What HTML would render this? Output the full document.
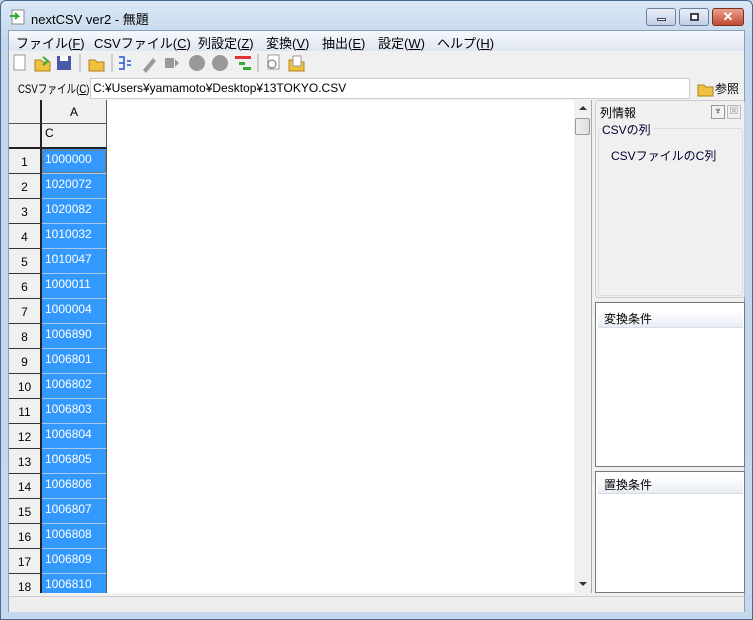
<!DOCTYPE html><html><head><meta charset="utf-8"><style>
*{margin:0;padding:0;box-sizing:border-box}
body{width:753px;height:620px;overflow:hidden;background:#c5d8ee;font-family:"Liberation Sans","Noto Sans CJK JP",sans-serif;font-size:12px;color:#000;position:relative}
.a{position:absolute}
.frame{left:0;top:0;width:753px;height:620px;border:1px solid #4a6a8c;border-radius:6px 6px 0 0;background:linear-gradient(#dbe8f6,#c3d7ec 40px,#c5d8ee)}
.client{left:8px;top:30px;width:737px;height:582px;background:#f0f0f0;border:1px solid #8aa0b8}
.menu{left:0;top:0;width:735px;height:20px;background:linear-gradient(#f6f8fc,#dfe6f2)}
.menu span{position:absolute;top:2px;font-size:13px}
.cell{position:absolute;border-right:1px solid #555;border-bottom:1px solid #555;text-align:center}
.rh{left:0;width:33px;height:25px;background:#f0f0f0;font-size:12px;line-height:26px;border-right:2px solid #222;border-bottom:1px solid #333}
.dc{left:33px;width:65px;height:25px;background:#3399ff;color:#fff;border-bottom:1px solid #a8c8ec;text-align:left;padding-left:3px;line-height:20px}
.btn{position:absolute;top:8px;height:18px;border:1px solid #6a7f9a;border-radius:3px;background:linear-gradient(#e8eef7,#c2d0e3)}
.pt{position:absolute;left:2px;width:145px;height:17px;background:linear-gradient(#fff,#e8ecf4);border-bottom:1px solid #d8dde8;padding-left:6px;font-size:12px;line-height:16px}
</style></head><body>
<div class="a frame"></div>
<svg class="a" style="left:9px;top:8px" width="18" height="18"><rect x="3" y="2" width="12" height="14" fill="#fff" stroke="#888"/><path d="M1 8h8l-3-3M9 8l-3 3" stroke="#3a3" stroke-width="2" fill="none"/></svg>
<div class="a" style="left:31px;top:9px;font-size:13px">nextCSV ver2 - 無題</div>
<div class="btn" style="left:646px;width:30px"><div class="a" style="left:10px;top:9px;width:9px;height:3px;background:#fff;border:1px solid #445"></div></div>
<div class="btn" style="left:679px;width:30px"><div class="a" style="left:10px;top:4px;width:9px;height:8px;border:2px solid #445;background:#fff"></div></div>
<div class="btn" style="left:712px;width:32px;background:linear-gradient(#e9a08e,#c24a33);border-color:#7a3020;color:#fff;font-weight:bold;text-align:center;line-height:16px;font-size:13px">✕</div>
<div class="a client">
 <div class="a menu">
  <span style="left:7px">ファイル(<u>F</u>)</span><span style="left:85px">CSVファイル(<u>C</u>)</span><span style="left:189px">列設定(<u>Z</u>)</span><span style="left:257px">変換(<u>V</u>)</span><span style="left:313px">抽出(<u>E</u>)</span><span style="left:369px">設定(<u>W</u>)</span><span style="left:428px">ヘルプ(<u>H</u>)</span>
 </div>
 <svg class="a" style="left:0;top:20px" width="300" height="24">
  <rect x="5" y="4" width="11" height="15" fill="#fff" stroke="#999"/>
  <path d="M26 9h6l2 2h7v9H26z" fill="#f0c040" stroke="#b08020"/><path d="M34 6l5 4-5 4" stroke="#3a3" stroke-width="2" fill="none"/>
  <rect x="48" y="5" width="14" height="14" fill="#4a5aa8"/><rect x="51" y="5" width="8" height="5" fill="#fff"/>
  <line x1="71" y1="3" x2="71" y2="21" stroke="#aaa"/>
  <path d="M80 9h6l2 2h7v9H80z" fill="#f0c040" stroke="#b08020"/>
  <line x1="103" y1="3" x2="103" y2="21" stroke="#aaa"/>
  <path d="M110 6h5v12h-5M110 12h5M118 10h4M118 14h4" stroke="#2255cc" fill="none" stroke-width="1.5"/>
  <path d="M134 19l10-12 3 3-10 12z" fill="#999"/>
  <rect x="156" y="7" width="9" height="10" fill="#999"/><path d="M166 8l4 4-4 4z" fill="#999"/>
  <circle cx="188" cy="12" r="8" fill="#999"/><circle cx="211" cy="12" r="8" fill="#999"/>
  <rect x="226" y="5" width="16" height="3" fill="#d33"/><rect x="230" y="11" width="6" height="3" fill="#3a3"/><rect x="234" y="16" width="8" height="3" fill="#3a3"/>
  <line x1="249" y1="3" x2="249" y2="21" stroke="#aaa"/>
  <rect x="259" y="4" width="11" height="14" fill="#fff" stroke="#999"/><circle cx="263" cy="13" r="4" fill="none" stroke="#567"/>
  <path d="M280 9h6l2 2h7v9H280z" fill="#f0c040" stroke="#b08020"/><rect x="284" y="5" width="8" height="10" fill="#fff" stroke="#999"/>
 </svg>
 <div class="a" style="left:81px;top:47px;width:600px;height:21px;background:#fff;border:1px solid #ccc;padding:2px 0 0 2px">C:¥Users¥yamamoto¥Desktop¥13TOKYO.CSV</div>
 <div class="a" style="left:9px;top:49px;font-size:12px;white-space:nowrap;transform:scaleX(0.8);transform-origin:left;z-index:2">CSVファイル(<u>C</u>)</div>
 <svg class="a" style="left:688px;top:50px" width="18" height="16"><path d="M1 4h6l2 2h7v9H1z" fill="#f0c040" stroke="#b08020"/></svg>
 <div class="a" style="left:706px;top:49px">参照</div>
 <div class="a" style="left:0;top:69px;width:583px;height:493px;background:#fff;border-right:1px solid #aaa;overflow:hidden">
  <div class="cell" style="left:0;top:0;width:33px;height:24px;background:#f0f0f0;border-right:2px solid #222"></div>
  <div class="cell" style="left:33px;top:0;width:65px;height:24px;background:#f0f0f0;line-height:24px;border-right:1px solid #555">A</div>
  <div class="cell" style="left:0;top:24px;width:33px;height:25px;background:#f0f0f0;border-right:2px solid #222;border-bottom:2px solid #222"></div>
  <div class="cell" style="left:33px;top:24px;width:65px;height:25px;background:#f0f0f0;text-align:left;padding-left:3px;line-height:18px;border-bottom:2px solid #222">C</div>
  <div id="rows"></div>
  <div class="a" style="left:565px;top:0;width:17px;height:493px;background:#f0f0f0"><div class="a" style="left:5px;top:6px;border:4px solid transparent;border-bottom:4px solid #333;border-top:0"></div><div class="a" style="left:1px;top:18px;width:15px;height:17px;border:1px solid #999;border-radius:2px;background:linear-gradient(90deg,#eee,#ddd)"></div><div class="a" style="left:5px;top:482px;border:4px solid transparent;border-top:4px solid #333;border-bottom:0"></div></div>
 </div>
 <div class="a" style="left:586px;top:69px;width:150px;height:198px;border:1px solid #ccc;border-radius:3px;background:#f0f0f0">
  <div class="a" style="left:4px;top:3px">列情報</div>
  <div class="a" style="left:115px;top:4px;width:14px;height:14px;border:1px solid #999;font-size:10px;text-align:center;line-height:12px">♆</div>
  <div class="a" style="left:131px;top:4px;width:14px;height:14px;border:1px solid #bbb;font-size:10px;text-align:center;line-height:12px;color:#999">☒</div>
  <div class="a" style="left:2px;top:27px;width:145px;height:168px;border:1px solid #ddd;border-radius:3px"></div>
  <div class="a" style="left:6px;top:20px;color:#003;background:#f0f0f0;padding-right:2px">CSVの列</div>
  <div class="a" style="left:15px;top:46px;color:#003">CSVファイルのC列</div>
 </div>
 <div class="a" style="left:586px;top:271px;width:150px;height:165px;border:1px solid #777;background:#fff"><div class="pt" style="top:8px">変換条件</div></div>
 <div class="a" style="left:586px;top:440px;width:150px;height:122px;border:1px solid #777;background:#fff"><div class="pt" style="top:5px">置換条件</div></div>
 <div class="a" style="left:0;top:565px;width:735px;height:16px;background:#eee;border-top:1px solid #ccc"></div>
</div>
<script>
var v=["1000000","1020072","1020082","1010032","1010047","1000011","1000004","1006890","1006801","1006802","1006803","1006804","1006805","1006806","1006807","1006808","1006809","1006810"],h="";
for(var i=0;i<18;i++){var t=49+i*25;h+='<div class="cell rh" style="top:'+t+'px">'+(i+1)+'</div><div class="cell dc" style="top:'+t+'px'+(i==0?';outline:1px dotted #a60;outline-offset:-2px':'')+'">'+v[i]+'</div>';}
document.getElementById("rows").innerHTML=h;
</script>
</body></html>
